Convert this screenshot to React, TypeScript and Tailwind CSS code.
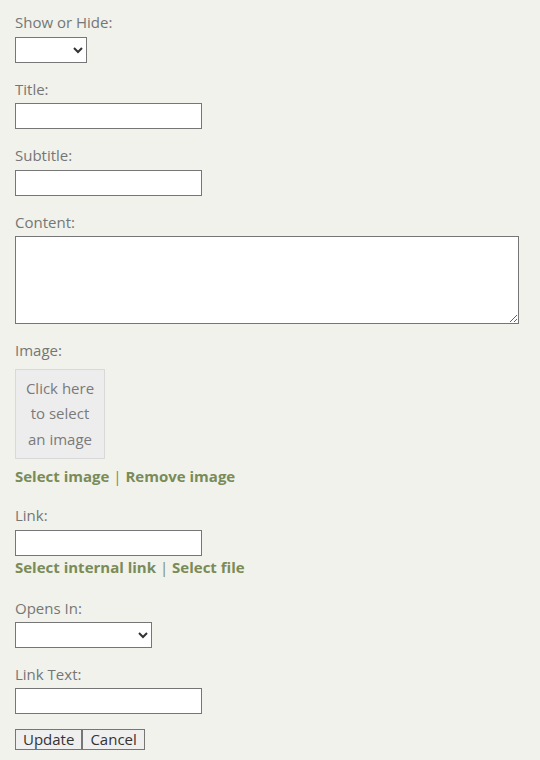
import React from 'react'

const label = 'block leading-[22px] text-[#767676]'
const box = 'block h-[26px] border border-[#767676] bg-white text-[15px] text-[#333]'
const linkCls = 'font-bold text-[#7a8b57]'

function Field({ name, children }: { name: string; children: React.ReactNode }) {
  return (
    <div className="mb-[15px]">
      <label className={label}>{name}</label>
      <div className="mt-[3.5px]">{children}</div>
    </div>
  )
}

export default function App() {
  return (
    <div className="min-h-screen bg-[#f0f2eb] px-[15px] pt-[11px] pb-4 font-['Open_Sans',sans-serif] text-[15px]">
      <Field name="Show or Hide:">
        <select className={`${box} w-[72px]`}>
          <option></option>
          <option>Show</option>
          <option>Hide</option>
        </select>
      </Field>

      <Field name="Title:">
        <input type="text" className={`${box} w-[187px] px-1`} />
      </Field>

      <Field name="Subtitle:">
        <input type="text" className={`${box} w-[187px] px-1`} />
      </Field>

      <Field name="Content:">
        <textarea className="block h-[88px] w-[504px] border border-[#767676] bg-white p-1" />
      </Field>

      <div>
        <label className={label}>Image:</label>
        <div className="mt-[8px] flex h-[90px] w-[90px] items-center justify-center border border-[#d9d9d9] bg-[#ededed] text-center leading-[25.5px] text-[#7a7a7a]">
          <span>
            Click here
            <br />
            to select
            <br />
            an image
          </span>
        </div>
        <div className="mt-[5.5px] leading-[22px]">
          <a className={linkCls}>Select image</a>
          <span className="text-[#7a8b57]"> | </span>
          <a className={linkCls}>Remove image</a>
        </div>
      </div>

      <div className="mt-[17.5px]">
        <label className={label}>Link:</label>
        <input type="text" className={`${box} mt-[3.5px] w-[187px] px-1`} />
        <div className="leading-[22px]">
          <a className={linkCls}>Select internal link</a>
          <span className="text-[#7a8b57]"> | </span>
          <a className={linkCls}>Select file</a>
        </div>
      </div>

      <div className="mt-[19px] mb-[14.5px]">
        <label className={label}>Opens In:</label>
        <select className={`${box} mt-[3.5px] w-[137px]`}>
          <option></option>
          <option>Same window</option>
          <option>New window</option>
        </select>
      </div>

      <div className="mb-[14.5px]">
        <label className={label}>Link Text:</label>
        <input type="text" className={`${box} mt-[3.5px] w-[187px] px-1`} />
      </div>

      <div className="flex">
        <button className="h-[21px] border border-[#767676] bg-[#efefef] px-[7px] text-[15px] leading-[19px] text-[#333]">
          Update
        </button>
        <button className="h-[21px] border border-[#767676] bg-[#efefef] px-[7px] text-[15px] leading-[19px] text-[#333]">
          Cancel
        </button>
      </div>
    </div>
  )
}
